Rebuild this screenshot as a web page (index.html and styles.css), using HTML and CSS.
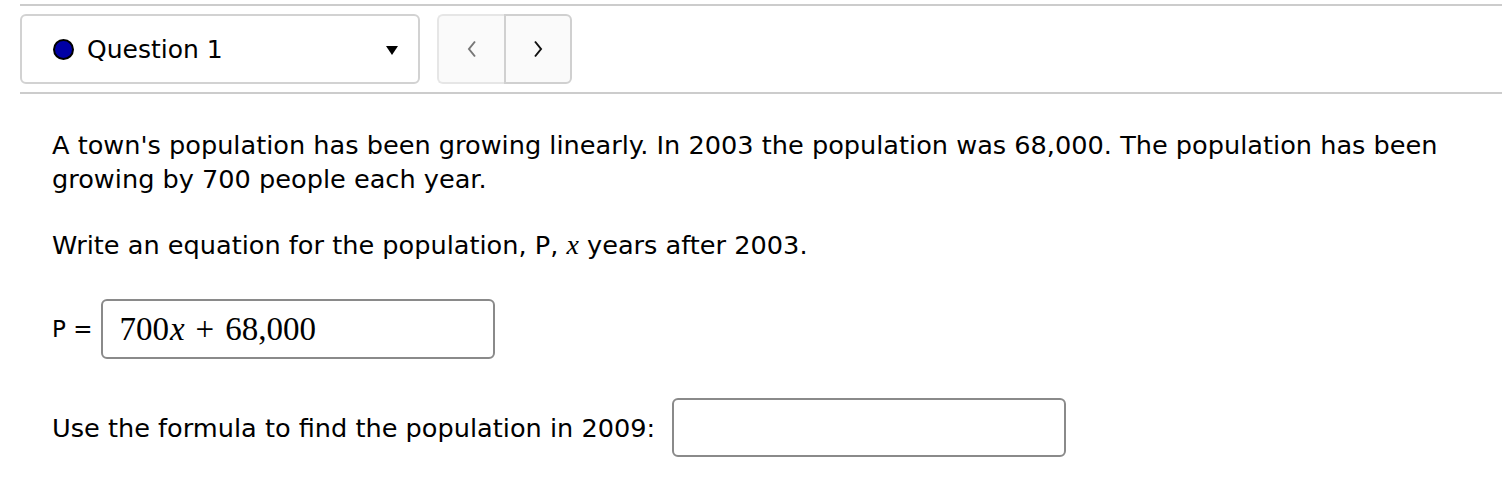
FILE: index.html
```html
<!DOCTYPE html>
<html lang="en">
<head>
<meta charset="utf-8">
<title>Question 1</title>
<link rel="stylesheet" href="styles.css">
</head>
<body>
<div class="page">
  <div class="navbar">
    <div class="qselect">
      <span class="dot"></span>
      <span class="qlabel">Question 1</span>
      <span class="caret"></span>
    </div>
    <div class="pager">
      <button class="pbtn prev" type="button" aria-label="Previous">
        <svg width="12" height="18" viewBox="0 0 12 18"><polyline points="9,1.5 3,9 9,16.5" fill="none" stroke="#777" stroke-width="2"/></svg>
      </button>
      <button class="pbtn next" type="button" aria-label="Next">
        <svg width="12" height="18" viewBox="0 0 12 18"><polyline points="3,1.5 9,9 3,16.5" fill="none" stroke="#111" stroke-width="2"/></svg>
      </button>
    </div>
  </div>
  <div class="question">
    <p class="para first">A town's population has been growing linearly. In 2003 the population was 68,000. The population has been growing by 700 people each year.</p>
    <p class="para second">Write an equation for the population, P, <span class="mvar">x</span> years after 2003.</p>
    <div class="answer-row row1">
      <span class="alabel">P =</span>
      <div class="abox"><span class="math">700<span class="mi">x</span><span class="mo">+</span>68,000</span></div>
    </div>
    <div class="answer-row row2">
      <span class="alabel">Use the formula to find the population in 2009:</span>
      <div class="abox empty"></div>
    </div>
  </div>
</div>
</body>
</html>
```

FILE: styles.css
```css
html, body {
  margin: 0;
  padding: 0;
  background: #ffffff;
}
body {
  font-family: "DejaVu Sans", Verdana, sans-serif;
  color: #000;
}
.page {
  padding-top: 4px;
}
.navbar {
  margin-left: 20px;
  border-top: 2px solid #cccccc;
  border-bottom: 2px solid #cccccc;
  padding: 8px 0;
  display: flex;
  align-items: center;
}
.qselect {
  box-sizing: border-box;
  width: 400px;
  height: 70px;
  border: 2px solid #d2d2d2;
  border-radius: 6px;
  display: flex;
  align-items: center;
  padding-left: 31px;
  padding-right: 20px;
}
.dot {
  box-sizing: border-box;
  width: 21px;
  height: 21px;
  border-radius: 50%;
  background: #0000a6;
  border: 2px solid #000;
  flex: none;
}
.qlabel {
  font-size: 25px;
  margin-left: 13px;
  flex: 1;
}
.caret {
  width: 0;
  height: 0;
  border-left: 6px solid transparent;
  border-right: 6px solid transparent;
  border-top: 9px solid #000;
  margin-top: 2px;
}
.pager {
  margin-left: 17px;
  display: flex;
  height: 70px;
}
.pbtn {
  box-sizing: border-box;
  width: 67px;
  height: 70px;
  background: #fafafa;
  display: flex;
  align-items: center;
  justify-content: center;
  padding: 0;
  margin: 0;
}
.pbtn.prev {
  border: 2px solid #e6e6e6;
  border-right: none;
  border-radius: 6px 0 0 6px;
}
.pbtn.next {
  border: 2px solid #d0d0d0;
  border-radius: 0 6px 6px 0;
  width: 68px;
}
.question {
  padding-left: 52px;
  padding-top: 34px;
}
.para {
  margin: 0;
  font-size: 25.6px;
  line-height: 34px;
  width: 1420px;
}
.para.second {
  margin-top: 32px;
}
.mvar {
  font-family: "Liberation Serif", "Times New Roman", serif;
  font-style: italic;
  font-size: 28px;
}
.answer-row {
  display: flex;
  align-items: center;
}
.row1 {
  margin-top: 37px;
}
.row2 {
  margin-top: 39px;
}
.alabel {
  font-size: 25.6px;
  line-height: 34px;
  margin-right: 17px;
}
.row1 .alabel {
  font-size: 23px;
  margin-right: 9px;
}
.abox {
  box-sizing: border-box;
  width: 394px;
  height: 60px;
  border: 2px solid #8a8a8a;
  border-radius: 6px;
  display: flex;
  align-items: center;
  padding-left: 16px;
}
.abox.empty {
  height: 59px;
}
.math {
  font-family: "Liberation Serif", "Times New Roman", serif;
  font-size: 33px;
}
.mi {
  font-style: italic;
  padding-left: 1px;
}
.mo {
  padding: 0 11px;
}
```
